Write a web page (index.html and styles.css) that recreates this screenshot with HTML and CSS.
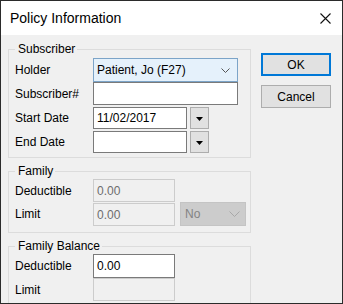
FILE: index.html
```html
<!DOCTYPE html>
<html>
<head>
<meta charset="utf-8">
<title>Policy Information</title>
<link rel="stylesheet" href="styles.css">
</head>
<body>
<div class="window">
  <div class="titlebar">
    <span class="title">Policy Information</span>
    <svg class="close" width="11" height="11" viewBox="0 0 11 11"><path d="M0.5 0.5L10.5 10.5M10.5 0.5L0.5 10.5" stroke="#111" stroke-width="1.1" fill="none"/></svg>
  </div>
  <div class="client">
    <div class="groups">
      <fieldset class="group g-sub">
        <legend>Subscriber</legend>
        <div class="row h24">
          <span class="lbl">Holder</span>
          <div class="combo focus w145"><span>Patient, Jo (F27)</span><svg class="chev" width="9" height="5" viewBox="0 0 9 5"><polyline points="0.5,0.5 4.5,4.5 8.5,0.5" fill="none" stroke="#555" stroke-width="1"/></svg></div>
        </div>
        <div class="row h23">
          <span class="lbl">Subscriber#</span>
          <div class="tb w145"></div>
        </div>
        <div class="row h22 mt2">
          <span class="lbl">Start Date</span>
          <div class="tb w94">11/02/2017</div>
          <div class="ddbtn"><svg width="7" height="4" viewBox="0 0 7 4"><polygon points="0,0 7,0 3.5,4" fill="#000"/></svg></div>
        </div>
        <div class="row h22 mt2">
          <span class="lbl">End Date</span>
          <div class="tb w94"></div>
          <div class="ddbtn"><svg width="7" height="4" viewBox="0 0 7 4"><polygon points="0,0 7,0 3.5,4" fill="#000"/></svg></div>
        </div>
      </fieldset>
      <fieldset class="group g-fam">
        <legend>Family</legend>
        <div class="row h23">
          <span class="lbl">Deductible</span>
          <div class="tb w82 dis">0.00</div>
        </div>
        <div class="row h24 end">
          <span class="lbl lbl-low">Limit</span>
          <div class="tb w82 dis h23b">0.00</div>
          <div class="combo dis-combo w66"><span>No</span><svg class="chev" width="11" height="6" viewBox="0 0 11 6"><polyline points="0.5,0.5 5.5,5.5 10.5,0.5" fill="none" stroke="#a8a8a8" stroke-width="1"/></svg></div>
        </div>
      </fieldset>
      <fieldset class="group g-bal">
        <legend>Family Balance</legend>
        <div class="row h24">
          <span class="lbl">Deductible</span>
          <div class="tb w82">0.00</div>
        </div>
        <div class="row h23">
          <span class="lbl">Limit</span>
          <div class="tb w82 dis"></div>
        </div>
      </fieldset>
    </div>
    <div class="buttons">
      <div class="btn default">OK</div>
      <div class="btn">Cancel</div>
    </div>
  </div>
</div>
</body>
</html>
```

FILE: styles.css
```css
* { box-sizing: border-box; }
html, body { margin: 0; padding: 0; background: #ffffff; }
body {
  font-family: "Liberation Sans", Arial, sans-serif;
  font-size: 12px;
  color: #000;
}
.window {
  width: 343px;
  height: 304px;
  border: 1px solid #2b2b2b;
  overflow: hidden;
  background: #f0f0f0;
}
.titlebar {
  height: 34px;
  background: #ffffff;
  display: flex;
  align-items: center;
  justify-content: space-between;
  padding: 0 11px 0 9px;
}
.title {
  font-size: 14px;
  color: #000;
  padding-bottom: 1px;
}
.close { display: block; margin-top: 0; }
.client {
  display: flex;
  padding: 7px 0 0 7px;
  gap: 10px;
  align-items: flex-start;
}
.groups {
  width: 243px;
  display: flex;
  flex-direction: column;
}
.group {
  margin: 0;
  border: 1px solid #dcdcdc;
  padding: 0 4px 0 6px;
  min-width: 0;
}
.group legend {
  padding: 0 2px 0 3px;
  margin-left: 0;
  line-height: 14px;
  height: 14px;
  font-size: 12px;
}
.g-sub { padding-top: 2px; padding-bottom: 4px; }
.g-fam { margin-top: 6px; padding-top: 1px; padding-bottom: 6px; }
.g-bal { margin-top: 6px; padding-top: 1px; padding-bottom: 20px; }
.row {
  display: flex;
  align-items: center;
}
.row.end { align-items: flex-end; }
.h22 { height: 22px; }
.h23 { height: 23px; }
.h24 { height: 24px; }
.mt2 { margin-top: 2px; }
.lbl {
  width: 78px;
  flex: none;
  white-space: nowrap;
}
.lbl-low { align-self: center; }
.tb {
  height: 100%;
  background: #fff;
  border: 1px solid #7a7a7a;
  padding: 0 3px;
  display: flex;
  align-items: center;
  flex: none;
  white-space: nowrap;
}
.tb.h23b { height: 23px; }
.tb.dis {
  background: #f0f0f0;
  border-color: #cccccc;
  color: #6d6d6d;
}
.w145 { width: 145px; }
.w94 { width: 94px; }
.w82 { width: 82px; }
.w66 { width: 66px; }
.combo {
  height: 100%;
  display: flex;
  align-items: center;
  justify-content: space-between;
  padding: 0 7px 0 3px;
  flex: none;
  white-space: nowrap;
}
.combo.focus {
  background: #e5f1fb;
  border: 1px solid #7ca4c8;
}
.combo.dis-combo {
  margin-left: 5px;
  background: #cccccc;
  border: 1px solid #c4c4c4;
  color: #838383;
  padding: 0 5px 0 4px;
}
.chev { display: block; }
.ddbtn {
  width: 19px;
  height: 22px;
  margin-left: 3px;
  background: #e1e1e1;
  border: 1px solid #adadad;
  display: flex;
  align-items: center;
  justify-content: center;
  flex: none;
}
.ddbtn svg { display: block; margin-top: 1px; }
.buttons {
  margin-top: 11px;
  width: 70px;
  display: flex;
  flex-direction: column;
  gap: 9px;
}
.btn {
  height: 23px;
  background: #e1e1e1;
  border: 1px solid #adadad;
  display: flex;
  align-items: center;
  justify-content: center;
}
.btn.default {
  border: 2px solid #0078d7;
}
```
